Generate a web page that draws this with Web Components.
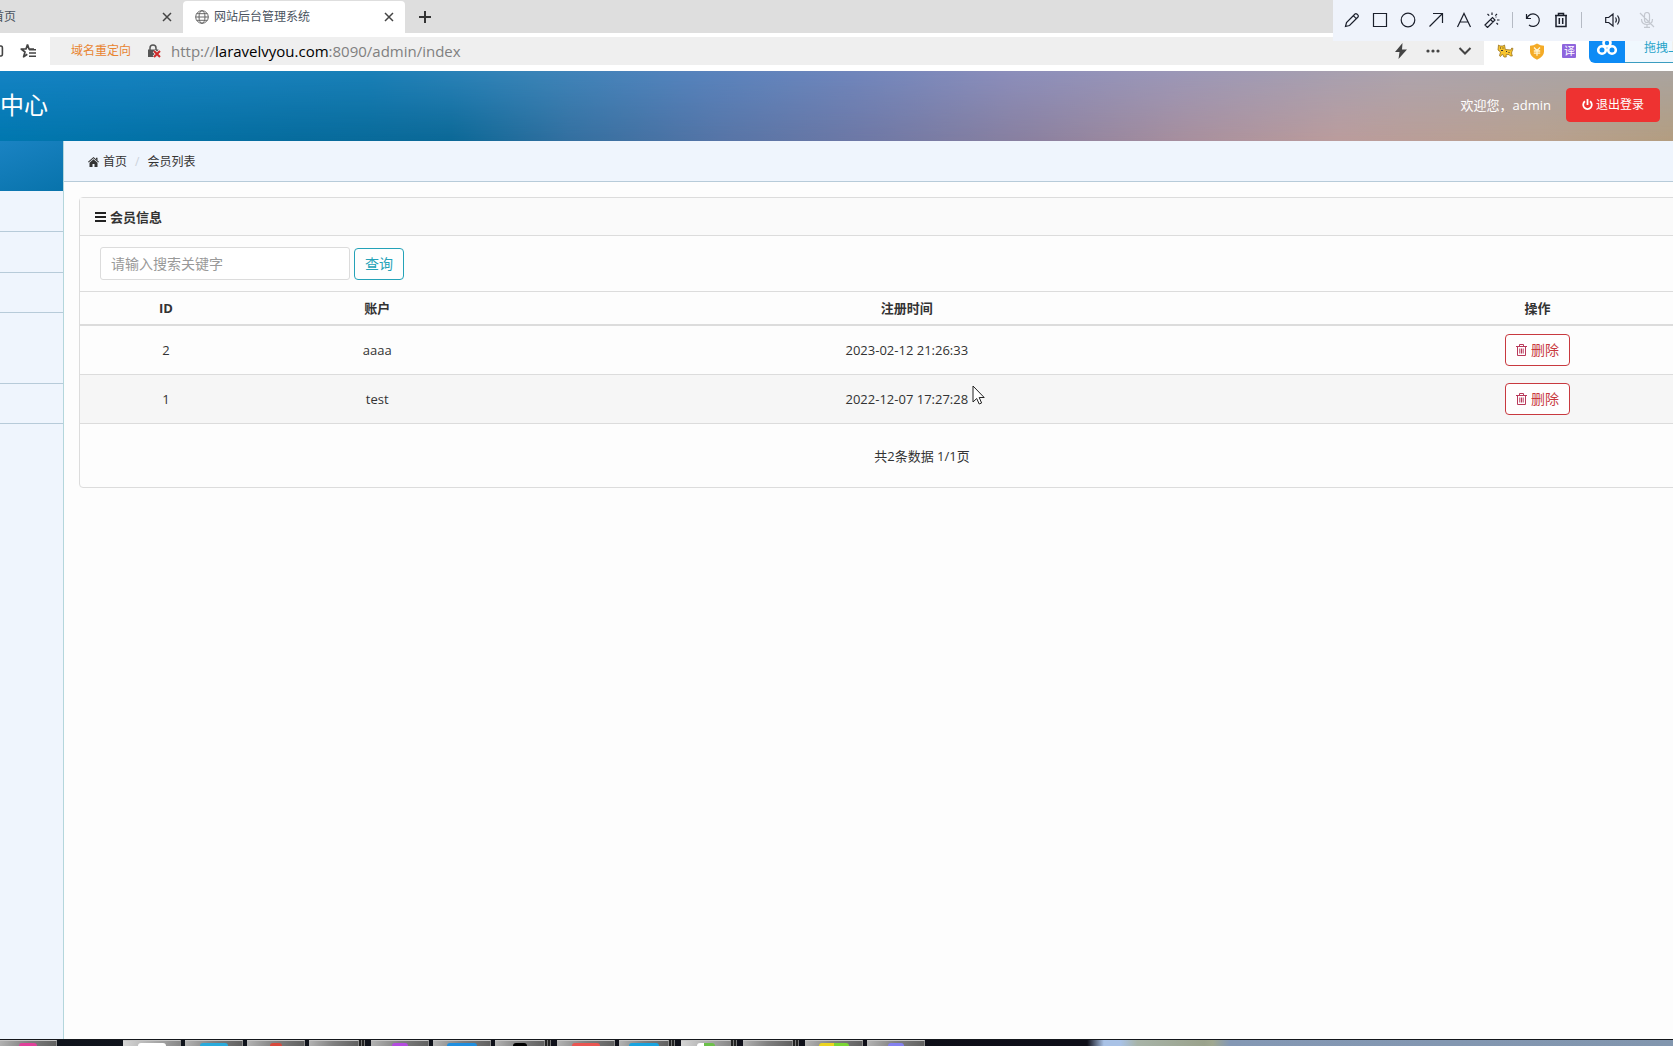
<!DOCTYPE html>
<html lang="zh-CN">
<head>
<meta charset="utf-8">
<title>网站后台管理系统</title>
<style>
    html, body {
        margin: 0;
        height: 100%;
    }
    body {
        font-family: "Open Sans", "Noto Sans CJK SC", sans-serif;
        font-size: 13px;
        line-height: 20px;
        color: #333;
        background: #fdfdfd;
        overflow: hidden;
        --line: #dcdcdc;
        --pane: #eff5fd;
        --pane-line: #b7cbd9;
    }
</style>
</head>
<body>
<desktop-screen></desktop-screen>

<script>
const define = (name, html, setup) => {
    const template = document.createElement('template');
    template.innerHTML = html;
    customElements.define(name, class extends HTMLElement {
        connectedCallback() {
            if (this.shadowRoot) return;
            const shadowRoot = this.attachShadow({mode: 'open'});
            shadowRoot.appendChild(template.content.cloneNode(true));
            if (setup) setup(shadowRoot, this);
        }
    });
};

/* ---------- browser ---------- */

define('browser-tab', `
    <style>
        :host {
            display: flex;
            align-items: center;
            box-sizing: border-box;
            height: 32px;
            padding: 0 9px 0 12px;
            font-size: 12px;
            color: #4a5360;
        }
        :host([active]) {
            background: #fff;
            border-radius: 4px 4px 0 0;
        }
        .label {
            flex: 1;
            white-space: nowrap;
        }
        button {
            display: flex;
            padding: 2px;
            border: 0;
            background: none;
        }
        ::slotted(svg) {
            margin-right: 5px;
        }
    </style>
    <slot name="icon"></slot>
    <span class="label"><slot></slot></span>
    <button aria-label="关闭标签页">
        <svg width="10" height="10" viewBox="0 0 10 10" stroke="#444" stroke-width="1.5"><path d="M1 1l8 8M9 1L1 9"/></svg>
    </button>
`);

define('browser-tabs', `
    <style>
        :host {
            display: flex;
            align-items: flex-end;
            height: 33px;
            background: #dedede;
        }
        browser-tab {
            width: 222px;
        }
        /* the strip starts left of the window */
        .first {
            width: 203px;
            margin-left: -20px;
        }
        .new {
            display: flex;
            align-self: center;
            padding: 0;
            margin-left: 14px;
            border: 0;
            background: none;
        }
    </style>
    <browser-tab class="first">首页</browser-tab>
    <browser-tab active>
        <svg slot="icon" width="14" height="14" viewBox="0 0 14 14" fill="none" stroke="#666"><circle cx="7" cy="7" r="6.3"/><ellipse cx="7" cy="7" rx="3" ry="6.3"/><path d="M.7 7h12.6M1.6 3.7h10.8M1.6 10.3h10.8"/></svg>
        网站后台管理系统
    </browser-tab>
    <button class="new" aria-label="新标签页">
        <svg width="12" height="12" viewBox="0 0 12 12" stroke="#333" stroke-width="2"><path d="M6 0v12M0 6h12"/></svg>
    </button>
`);

define('browser-toolbar', `
    <style>
        :host {
            display: flex;
            align-items: center;
            box-sizing: border-box;
            height: 38px;
            padding-bottom: 2px;
            background: #fff;
        }
        button {
            display: flex;
            align-items: center;
            justify-content: center;
            height: 28px;
            padding: 0;
            border: 0;
            background: none;
        }
        .left {
            display: flex;
            width: 50px;
        }
        .left button:last-child {
            margin-left: 16px;
        }
        .address {
            display: flex;
            flex: 1;
            align-items: center;
            height: 28px;
            padding-left: 21px;
            background: #efefef;
        }
        .tag {
            width: 76px;
            font-size: 12px;
            color: #e8842f;
        }
        .url {
            flex: 1;
            margin-left: 10px;
            font-size: 15px;
            color: #808080;
            outline: 0;
        }
        .url b {
            font-weight: 400;
            color: #000;
        }
        .address button {
            width: 32px;
        }
        .address button:last-child {
            margin-right: 3px;
        }
        .extensions {
            display: flex;
            width: 189px;
            padding-left: 5px;
            box-sizing: border-box;
        }
        .extensions button {
            width: 32px;
        }
        .translate {
            width: 14px;
            height: 14px;
            border-radius: 1px;
            background: #8f66dd;
            color: #fff;
            font-size: 11px;
            line-height: 14px;
        }
    </style>
    <div class="left">
        <button aria-label="阅读"><svg width="4" height="14" viewBox="0 0 4 14" fill="none" stroke="#444" stroke-width="1.6"><path d="M-3 2H1Q2.4 2 2.4 4v6q0 2-1.4 2h-4"/></svg></button>
        <button aria-label="收藏"><svg width="17" height="16" viewBox="0 0 17 16"><path d="M7.500 1.500L9 6h5M7.500 1.500L6 6H1.200l3.800 3L3.600 13.800l3.700-2.600" fill="none" stroke="#444" stroke-width="1.700" stroke-linejoin="round"/><path d="M9 6.700h7M9 10h7M9 13.200h7" stroke="#444" stroke-width="1.600"/></svg></button>
    </div>
    <div class="address">
        <span class="tag">域名重定向</span>
        <svg width="14" height="14" viewBox="0 0 14 14"><path d="M3 6V4a3 3 0 0 1 6 0v2" fill="none" stroke="#555" stroke-width="1.500"/><path d="M1 5.500h10.500V13H1z" fill="#555"/><path d="M7 7l6 6M13 7l-6 6" stroke="#efefef" stroke-width="3.600"/><path d="M7 7l6 6M13 7l-6 6" stroke="#cf2b2b" stroke-width="2"/></svg>
        <div class="url" role="textbox" aria-label="地址栏" contenteditable="true" spellcheck="false">http://<b>laravelvyou.com</b>:8090/admin/index</div>
        <button aria-label="极速模式"><svg width="12" height="16" viewBox="0 0 12 16"><path d="M7.500 0L0 9h4.500L3.500 16 12 6.500H7z" fill="#444"/></svg></button>
        <button aria-label="更多"><svg width="14" height="4" viewBox="0 0 14 4" fill="#444"><circle cx="2" cy="2" r="1.600"/><circle cx="7" cy="2" r="1.600"/><circle cx="12" cy="2" r="1.600"/></svg></button>
        <button aria-label="展开"><svg width="14" height="8" viewBox="0 0 14 8" fill="none" stroke="#444" stroke-width="2"><path d="M1.500 1L7 6.500 12.500 1"/></svg></button>
    </div>
    <div class="extensions">
        <button aria-label="宠物"><svg width="17" height="14" viewBox="0 0 17 14"><path d="M1.500 1l1.500 1h3l1.500-1 .8 4.500 5.500.5 1-2 1.200.5-1 3-.5 1.500.8 3h-2L12 10.500l-3 .2.300 2.300H7L5.500 10l-2 2.500-1-.7L3.500 8 1 6z" fill="#f8c42c" stroke="#9a7320" stroke-width=".8"/><path d="M3 4h1M5.500 4h1M4 6.500h2M9 7.500h1M11.500 8.500h1" stroke="#333"/></svg></button>
        <button aria-label="优惠"><svg width="16" height="17" viewBox="0 0 16 17"><path d="M8 .5q3.500 2.200 7 2.200v6q0 4.600-7 8-7-3.400-7-8v-6Q4.500 2.700 8 .5z" fill="#f4ab27"/><path d="M5 4.500l3 3 3-3M4.800 8h6.400M4.800 10.200h6.400M8 7.500v5.300" fill="none" stroke="#fff3d0" stroke-width="1.300"/></svg></button>
        <button aria-label="翻译"><span class="translate">译</span></button>
    </div>
`);

/* drawing tools floating over the top right of the window */
define('annotation-bar', `
    <style>
        :host {
            display: flex;
            align-items: center;
            box-sizing: border-box;
            width: 340px;
            height: 41px;
            padding: 0 0 2px 5px;
            background: #eff3fb;
        }
        button {
            display: flex;
            align-items: center;
            justify-content: center;
            flex: none;
            width: 28px;
            height: 28px;
            padding: 0;
            border: 0;
            background: none;
        }
        i {
            width: 1px;
            height: 16px;
            margin: 0 6px;
            background: #b5bac4;
        }
        .audio {
            display: flex;
            gap: 6px;
            margin-left: 11px;
        }
        svg {
            width: 16px;
            height: 16px;
            fill: none;
            stroke: #1b1f2b;
            stroke-width: 1.2;
        }
        .off svg {
            stroke: #c3c7cf;
        }
    </style>
    <button aria-label="画笔"><svg viewBox="0 0 16 16"><path d="M1.500 14.500l1-4L11 2a1.300 1.300 0 0 1 1.800 0l1.200 1.200a1.300 1.300 0 0 1 0 1.800L5.500 13.500zM9.300 3.700l3 3"/></svg></button>
    <button aria-label="矩形"><svg viewBox="0 0 16 16"><path d="M1.500 1.500h13v13h-13z"/></svg></button>
    <button aria-label="椭圆"><svg viewBox="0 0 16 16"><circle cx="8" cy="8" r="6.800"/></svg></button>
    <button aria-label="箭头"><svg viewBox="0 0 16 16"><path d="M1.500 14.500L14.500 1.500M5 1.500h9.500V11"/></svg></button>
    <button aria-label="文字"><svg viewBox="0 0 16 16"><path d="M1.500 15L8 1.500 14.500 15M4 10h8"/></svg></button>
    <button aria-label="荧光笔"><svg viewBox="0 0 16 16"><path d="M1 13l7.500-7.500L11 8l-7.500 7.500zM6.500 7.500L9 10M8 .5v2.500M3.500 2l1.700 1.700M13 2l-1.700 1.700M15.500 8H13M12.500 11l1.500 1.500M11.500 5h1"/></svg></button>
    <i></i>
    <button aria-label="撤销"><svg viewBox="0 0 16 16"><path d="M1.500 2v4.500H6M2 6.200A6.300 6.300 0 1 1 4 13"/></svg></button>
    <button aria-label="清空"><svg viewBox="0 0 16 16"><path d="M2 3.500h12M5.500 3.500v-2h5v2M3 3.500v11h10v-11M6.300 6v6M9.700 6v6" stroke-width="1.500"/></svg></button>
    <i></i>
    <div class="audio">
        <button aria-label="声音"><svg viewBox="0 0 16 16"><path d="M.7 5.500h3L8 2v12L3.700 10.500h-3zM10.500 5.500q1.700 2.500 0 5M12.500 3.500q3.200 4.500 0 9"/></svg></button>
        <button class="off" aria-label="麦克风"><svg viewBox="0 0 16 16"><path d="M5.500 3a2.500 2.500 0 0 1 5 0v5a2.500 2.500 0 0 1-5 0zM2.500 7q0 5.500 5.500 5.500T13.500 7M8 12.500V15M5 15.300h6M1 1l14 14"/></svg></button>
    </div>
`);

define('upload-drop', `
    <style>
        :host {
            display: flex;
            box-sizing: border-box;
            width: 84px;
            height: 22px;
            overflow: hidden;
            color: #27a3c9;
            font-size: 12px;
        }
        .logo {
            display: flex;
            flex: none;
            justify-content: center;
            width: 36px;
            background: #0d8bf5;
            border-bottom-left-radius: 6px;
        }
        .text {
            flex: 1;
            padding-left: 19px;
            line-height: 13px;
            white-space: nowrap;
            background: #f0f8fe;
            border-bottom: 1px solid #3a9dc0;
        }
    </style>
    <span class="logo"><svg width="22" height="15" viewBox="0 0 22 15" fill="none" stroke="#fff" stroke-width="2.600"><circle cx="11" cy="2" r="3.500"/><circle cx="6" cy="9" r="3.800"/><circle cx="16" cy="9" r="3.800"/></svg></span>
    <span class="text">拖拽上传</span>
`);

/* ---------- admin page ---------- */

define('action-button', `
    <style>
        :host {
            display: inline-flex;
            --tone: #24a2b8;
        }
        :host([tone="danger"]) {
            --tone: #c8393f;
        }
        :host([tone="logout"]) {
            --tone: #fff;
        }
        button {
            display: flex;
            align-items: center;
            gap: 4px;
            height: 32px;
            padding: 0 10px;
            border: 1px solid var(--tone);
            border-radius: 4px;
            background: #fefefe;
            color: var(--tone);
            font: inherit;
            font-size: 14px;
        }
        :host([tone="logout"]) button {
            height: 34px;
            gap: 3px;
            padding: 0 15px;
            border-color: #ee3231;
            background: #ee3231;
            font-size: 12px;
        }
    </style>
    <button><slot name="icon"></slot><slot></slot></button>
`);

define('admin-header', `
    <style>
        :host {
            display: flex;
            align-items: center;
            justify-content: space-between;
            box-sizing: border-box;
            position: relative;
            flex: none;
            height: 70px;
            padding-bottom: 2px;
            color: #fff;
            background: linear-gradient(90deg, #1483c4 0%, #1a80b8 22%, #3a84b8 32%, #5583bd 41%, #7086bc 51%, #8b8ebb 60%, #9b97b8 70%, #ada4ad 84%, #aaa49f 100%);
        }
        :host::before {
            content: "";
            position: absolute;
            inset: 0;
            background: linear-gradient(90deg, #0077af 0%, #066b9c 18%, #0b6896 27%, #336f9f 34%, #5674a6 43%, #6f78a5 52%, #8c819f 62%, #a88f9d 71%, #bb9c9c 80%, #b8a18f 92%, #b39d80 100%);
            -webkit-mask: linear-gradient(transparent, #000);
            mask: linear-gradient(transparent, #000);
        }
        h1, .user {
            position: relative;
            margin: 0;
        }
        h1 {
            font-size: 24px;
            font-weight: 400;
            line-height: 32px;
        }
        .user {
            display: flex;
            align-items: center;
            gap: 15px;
            padding-right: 13px;
        }
    </style>
    <h1>中心</h1>
    <div class="user">
        <span>欢迎您，admin</span>
        <action-button tone="logout">
            <svg slot="icon" width="11" height="12" viewBox="0 0 11 12" fill="none" stroke="#fff" stroke-width="1.800"><path d="M5.500 0v6M3 2.300a4.300 4.300 0 1 0 5 0"/></svg>
            退出登录
        </action-button>
    </div>
`);

define('side-menu', `
    <style>
        :host {
            box-sizing: border-box;
            flex: none;
            width: 64px;
            background: var(--pane);
            border-right: 1px solid #b4d6dc;
        }
        .top {
            height: 50px;
            background: linear-gradient(160deg, #1a83c3, #0873ab);
        }
        ul {
            margin: 0;
            padding: 0;
            list-style: none;
        }
        li {
            height: 40px;
            border-bottom: 1px solid var(--pane-line);
        }
        li:nth-child(3), li:last-child {
            height: 39px;
        }
        li.tall {
            height: 70px;
        }
    </style>
    <div class="top"></div>
    <ul><li></li><li></li><li></li><li class="tall"></li><li></li></ul>
`);

define('bread-crumb', `
    <style>
        :host {
            display: flex;
            align-items: center;
            box-sizing: border-box;
            height: 41px;
            padding: 1px 0 0 24px;
            background: var(--pane);
            border-bottom: 1px solid var(--pane-line);
            font-size: 12px;
        }
        a {
            display: flex;
            align-items: center;
            gap: 4px;
            color: inherit;
            text-decoration: none;
        }
        .slash {
            padding: 0 8px;
            color: #ccd2da;
        }
    </style>
    <a href="#"><svg width="11" height="10" viewBox="0 0 11 10" fill="#333"><path d="M5.500 0L11 4.800l-.7.700-4.800-4.200L.7 5.500 0 4.800zM8 .8h1.500v2.400L8 2zM5.500 2.200l4 3.500V10h-3V7h-2v3h-3V5.700z"/></svg>首页</a>
    <span class="slash">/</span>
    <span>会员列表</span>
`);

define('member-search', `
    <style>
        form {
            display: flex;
            align-items: center;
            gap: 4px;
            height: 55px;
            padding-left: 20px;
        }
        input {
            box-sizing: border-box;
            width: 250px;
            height: 33px;
            padding: 0 10px;
            border: 1px solid var(--line);
            border-radius: 3px;
            background: #fff;
            font: inherit;
            font-size: 14px;
            color: #444;
        }
        input::placeholder {
            color: #999;
        }
    </style>
    <form>
        <input type="text" aria-label="搜索关键字" placeholder="请输入搜索关键字">
        <action-button>查询</action-button>
    </form>
`);

const members = [
    {id: 2, name: 'aaaa', time: '2023-02-12 21:26:33'},
    {id: 1, name: 'test', time: '2022-12-07 17:27:28'}
];

define('member-table', `
    <style>
        :host {
            display: block;
        }
        table {
            width: 100%;
            table-layout: fixed;
            border-collapse: separate;
            border-spacing: 0;
            text-align: center;
        }
        .id { width: 10.2%; }
        .name { width: 14.9%; }
        .time { width: 48%; }
        th {
            height: 32px;
            padding: 0;
            border-top: 1px solid var(--line);
            border-bottom: 2px solid var(--line);
        }
        td {
            height: 48px;
            padding: 0;
            border-bottom: 1px solid var(--line);
        }
        tr:nth-child(even) td {
            background: #f6f6f6;
        }
        action-button {
            vertical-align: middle;
        }
    </style>
    <table>
        <thead><tr><th class="id">ID</th><th class="name">账户</th><th class="time">注册时间</th><th>操作</th></tr></thead>
        <tbody></tbody>
    </table>
`, root => {
    root.querySelector('tbody').innerHTML = members.map(m => `
        <tr>
            <td>${m.id}</td><td>${m.name}</td><td>${m.time}</td>
            <td><action-button tone="danger"><svg slot="icon" width="11" height="12" viewBox="0 0 11 12" fill="none" stroke="#b8395a"><path d="M0 2.500h11M3.500 2.500v-2h4v2M1.500 2.500v9h8v-9M3.800 4.500v5M5.500 4.500v5M7.200 4.500v5"/></svg>删除</action-button></td>
        </tr>`).join('');
});

define('info-card', `
    <style>
        :host {
            display: block;
            border: 1px solid var(--line);
            border-radius: 4px;
        }
        h2 {
            display: flex;
            align-items: center;
            gap: 4px;
            height: 37px;
            margin: 0;
            padding-left: 15px;
            border-bottom: 1px solid var(--line);
            background: #fafafa;
            font-size: 13px;
        }
        footer {
            padding: 22px 0 21px;
            text-align: center;
        }
    </style>
    <h2><svg width="11" height="10" viewBox="0 0 11 10" stroke="#222" stroke-width="2"><path d="M0 1h11M0 5h11M0 9h11"/></svg><slot name="title"></slot></h2>
    <slot></slot>
    <footer><slot name="footer"></slot></footer>
`);

/* ---------- task bar ---------- */

const tasks = [
    {icon: '#e0409a', width: 18},
    null,
    {icon: '#fff', width: 28, light: true},
    {icon: '#29abdc', width: 28},
    {icon: '#d8493c', width: 12},
    {stack: true},
    {icon: '#b44be0', width: 16},
    {icon: '#1f8fe0', width: 30},
    {icon: '#000', width: 14, stack: true},
    {icon: '#ea5652', width: 28},
    {icon: '#18a4e0', width: 30, stack: true},
    {icon: 'linear-gradient(90deg, #fff 40%, #6cc04a 40%)', width: 18, stack: true, light: true},
    {stack: true},
    {icon: 'linear-gradient(90deg, #ecd520 50%, #7bd634 50%)', width: 30},
    {icon: '#8481f0', width: 16}
];

define('task-bar', `
    <style>
        :host {
            display: flex;
            flex: none;
            gap: 4px;
            box-sizing: border-box;
            height: 7px;
            margin-left: -1px;
            overflow: hidden;
            border-top: 1px solid #14171c;
            background: linear-gradient(90deg, #10141c 0, #0e0e18 65%, #a9c2e6 66%, #a9c2e6 67%, #a8b4a8 68%, #9aa28c 72%, #a0a890 72.500%, #8498b4 73.500%, #8296ae 100%);
        }
        button, span {
            flex: none;
            box-sizing: border-box;
            width: 58px;
        }
        button {
            display: flex;
            justify-content: center;
            padding: 2px 0 0;
            border: 0;
            border-top: 1px solid #c4c4c4;
            border-right: 1px solid #8b8b8b;
            background: linear-gradient(100deg, #b4b4b4, #808080 50%, #606060);
        }
        .light {
            background: linear-gradient(90deg, #d6d6d6, #888);
        }
        .stack {
            width: 50px;
            margin-right: 8px;
            box-shadow: 2px 0 #222, 3px 0 #777, 5px 0 #222, 6px 0 #777;
        }
        i {
            height: 8px;
            border-radius: 3px 3px 0 0;
        }
    </style>
`, root => {
    tasks.forEach(task => {
        const item = document.createElement(task ? 'button' : 'span');
        if (task) {
            item.classList.toggle('stack', !!task.stack);
            item.classList.toggle('light', !!task.light);
            item.setAttribute('aria-label', '任务');
            if (task.icon) item.innerHTML = `<i style="width: ${task.width}px; background: ${task.icon}"></i>`;
        }
        root.appendChild(item);
    });
});

/* ---------- whole screen ---------- */

define('desktop-screen', `
    <style>
        :host {
            display: flex;
            flex-direction: column;
            position: relative;
            height: 100vh;
            overflow: hidden;
        }
        .body {
            display: flex;
            flex: 1;
            min-height: 0;
        }
        main {
            flex: 1;
            min-width: 0;
        }
        /* the page is wider than the window and runs out on the right */
        info-card {
            margin: 15px -92px 0 15px;
        }
        browser-tabs, browser-toolbar {
            flex: none;
        }
        annotation-bar {
            position: absolute;
            top: 0;
            right: 0;
        }
        upload-drop {
            position: absolute;
            top: 41px;
            right: 0;
        }
        .pointer {
            position: absolute;
            left: 972px;
            top: 385px;
        }
    </style>
    <browser-tabs></browser-tabs>
    <browser-toolbar></browser-toolbar>
    <admin-header></admin-header>
    <div class="body">
        <side-menu></side-menu>
        <main>
            <bread-crumb></bread-crumb>
            <info-card>
                <span slot="title">会员信息</span>
                <member-search></member-search>
                <member-table></member-table>
                <span slot="footer">共2条数据 1/1页</span>
            </info-card>
        </main>
    </div>
    <task-bar></task-bar>
    <annotation-bar></annotation-bar>
    <upload-drop></upload-drop>
    <svg class="pointer" width="14" height="21" viewBox="0 0 14 21"><path d="M1 1v16l3.700-3.500L7.200 19l2.400-1-2.400-5.500h5z" fill="#fff" stroke="#222"/></svg>
`);
</script>
</body>
</html>
